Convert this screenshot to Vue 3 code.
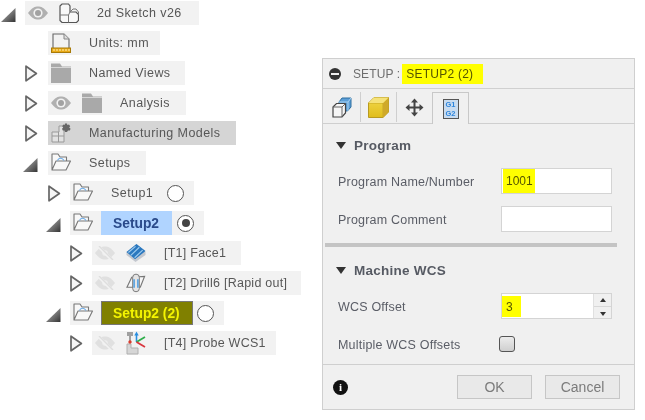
<script setup>
const rows = [
  { lvl: 0, tog: 'open', eye: 'on', icon: 'body', text: '2d Sketch v26', w: 174 },
  { lvl: 1, tog: '', icon: 'units', text: 'Units: mm', w: 112 },
  { lvl: 1, tog: 'closed', icon: 'folder', text: 'Named Views', w: 137 },
  { lvl: 1, tog: 'closed', eye: 'on', icon: 'folder', text: 'Analysis', w: 138 },
  { lvl: 1, tog: 'closed', icon: 'models', text: 'Manufacturing Models', w: 188, dark: true },
  { lvl: 1, tog: 'open', icon: 'setup', text: 'Setups', w: 98 },
  { lvl: 2, tog: 'closed', icon: 'setup', text: 'Setup1', w: 124, radio: 'off' },
  { lvl: 2, tog: 'open', icon: 'setup', text: 'Setup2', w: 134, radio: 'on', mark: 'blue' },
  { lvl: 3, tog: 'closed', eye: 'off', icon: 'face', text: '[T1] Face1', w: 149 },
  { lvl: 3, tog: 'closed', eye: 'off', icon: 'drill', text: '[T2] Drill6 [Rapid out]', w: 209 },
  { lvl: 2, tog: 'open', icon: 'setup', text: 'Setup2 (2)', w: 154, radio: 'off', mark: 'olive' },
  { lvl: 3, tog: 'closed', eye: 'off', icon: 'probe', text: '[T4] Probe WCS1', w: 184, tall: true },
]
</script>

<template>
  <div class="screen">
    <svg class="defs" width="0" height="0" aria-hidden="true">
      <defs>
        <linearGradient id="tri" x1="0" y1="0" x2="1" y2="1">
          <stop offset="0" stop-color="#c4c4c4" /><stop offset="1" stop-color="#333" />
        </linearGradient>
        <linearGradient id="gold" x1="0" y1="0" x2="0" y2="1">
          <stop offset="0" stop-color="#f2d84a" /><stop offset="1" stop-color="#e0bd1c" />
        </linearGradient>
        <symbol id="eye-on" viewBox="0 0 20 14">
          <path d="M0 7C4 1.5 7 0.5 10 0.5S16 1.5 20 7C16 12.5 13 13.5 10 13.5S4 12.5 0 7Z" fill="#b0b0b0" />
          <circle cx="10" cy="7" r="4.6" fill="#f2f2f2" /><circle cx="10" cy="7" r="3" fill="#a2a2a2" />
        </symbol>
        <symbol id="eye-off" viewBox="0 0 20 14">
          <path d="M0 7C4 1.5 7 0.5 10 0.5S16 1.5 20 7C16 12.5 13 13.5 10 13.5S4 12.5 0 7Z" fill="#e0e0e0" />
          <circle cx="10" cy="7" r="2.8" fill="#eeeeee" />
          <path d="M3 0L17 14" stroke="#f2f2f2" stroke-width="3" /><path d="M4 0L18 14" stroke="#dedede" stroke-width="1.4" />
        </symbol>
        <symbol id="body" viewBox="0 0 20 20">
          <path d="M1 3L3 1H9.5L11 3V9H17L19.5 11.5V17.5L17.5 19.5H3L1 17.5Z" fill="#f8f8f8" stroke="#555" stroke-width="1.2" />
          <path d="M11 9L14 6H17L19.5 9V11.5M1 12H9.5V19.5M9.5 12L11 9" fill="none" stroke="#777" stroke-width="1" />
        </symbol>
        <symbol id="units" viewBox="0 0 20 20">
          <path d="M2 15V1H13L18 6V15" fill="#f2f2f2" stroke="#666" stroke-width="1.1" />
          <path d="M13 1V6H18" fill="#ddd" stroke="#888" />
          <rect x="0.5" y="15" width="19" height="4.5" fill="#e8a916" stroke="#a87a08" />
          <path d="M3 16V18M6 16V18M9 16V18M12 16V18M15 16V18M18 16V18" stroke="#fff0b8" />
        </symbol>
        <symbol id="folder" viewBox="0 0 20 20">
          <path d="M0 4.5V0.5H9L11 3.5H20V20H0Z" fill="#a9a9a9" /><path d="M0 4.5H20" stroke="#d6d6d6" />
        </symbol>
        <symbol id="models" viewBox="0 0 20 20">
          <path d="M1 9H8V3H13V19H1ZM1 13H13M7.5 9V19" fill="#e2e2e2" stroke="#999" stroke-width="1" />
          <path d="M14 0.5L16 .5L16.4 2L18 1.6L19.2 3.2L18.2 4.6L19.6 5.8L18.8 7.6L17 7.4L16 9H14L13.6 7.4L11.8 7.6L11 5.8L12.2 4.6L11.2 3.2L12.4 1.6L13.6 2Z" fill="#666" />
        </symbol>
        <symbol id="setup" viewBox="0 0 20 20">
          <path d="M1 17V1H7L9 4H15.5V8M1 17L5 8H19.5L15 17Z" fill="#f8f8f8" stroke="#777" stroke-width="1.1" stroke-linejoin="round" />
          <path d="M6.5 7.5C7.5 4.5 11.5 4.5 13 7.5" fill="none" stroke="#6aaae8" stroke-width="1.1" />
        </symbol>
        <symbol id="face" viewBox="0 0 21 20">
          <path d="M0.5 9L11 0.5L20.5 9V12L10 19.5L0.5 12Z" fill="#c4c8cf" />
          <path d="M0.5 9L11 0.5L20.5 8L9.5 16.5Z" fill="#2b78bf" />
          <path d="M5 12.5L14 4M9 15L17.5 7M2.5 9.5L10 3" stroke="#9dcbee" stroke-width="1.2" />
        </symbol>
        <symbol id="drill" viewBox="0 0 21 20">
          <path d="M1 14.5L6 4L19.5 3L15 14.5Z" fill="#f6f6f6" stroke="#777" stroke-width="1.2" />
          <rect x="7" y="0.7" width="7" height="18.5" rx="3.5" fill="#e4e4e4" stroke="#777" />
          <path d="M8.5 6V15M12.5 6V15" stroke="#2f8fe0" stroke-width="1.3" />
        </symbol>
        <symbol id="probe" viewBox="0 0 20 24">
          <path d="M1 1H7V5H5V10H3V5H1Z" fill="#a0a0a0" />
          <path d="M1 13H5V17H12V23H1Z" fill="#d6d6d6" stroke="#b0b0b0" />
          <circle cx="4" cy="11" r="1.7" fill="#d93a2b" />
          <path d="M10.5 11V3" stroke="#2a8fe0" stroke-width="1.6" /><path d="M8.3 4.5L10.5 .5L12.7 4.5Z" fill="#2a8fe0" />
          <path d="M10.5 11L19 6" stroke="#2fae4b" stroke-width="1.8" />
          <path d="M10.5 11L19 16" stroke="#d9363e" stroke-width="1.8" />
        </symbol>
      </defs>
    </svg>

    <section class="tree">
      <div v-for="r in rows" :key="r.text" class="row" :class="'lvl' + r.lvl">
        <span class="tog">
          <svg v-if="r.tog === 'open'" class="tri" width="15" height="14" viewBox="0 0 15 14"><path d="M0 14L14.5 0V14Z" fill="url(#tri)" /></svg>
          <svg v-else-if="r.tog === 'closed'" width="13" height="17" viewBox="0 0 13 17"><path d="M1 1.2L11.4 8.5L1 15.8Z" fill="#f6f6f6" stroke="#666" stroke-width="1.7" stroke-linejoin="round" /></svg>
        </span>
        <div class="pill" :class="{ dark: r.dark }" :style="{ width: r.w + 'px' }">
          <svg v-if="r.eye" class="eye" viewBox="0 0 20 14"><use :href="'#eye-' + r.eye" /></svg>
          <svg class="ic" :class="{ tall: r.tall }" :viewBox="r.tall ? '0 0 20 24' : '0 0 20 20'"><use :href="'#' + r.icon" /></svg>
          <span v-if="r.mark" class="mark" :class="r.mark">{{ r.text }}</span>
          <span v-else class="label">{{ r.text }}</span>
          <span v-if="r.radio" class="radio" :class="r.radio"></span>
        </div>
      </div>
    </section>

    <section class="panel">
      <header class="title">
        <span class="minus"></span>
        <span class="t1">SETUP :</span>
        <span class="t2">SETUP2 (2)</span>
      </header>
      <nav class="tabs">
        <span class="tab sep">
          <svg width="20" height="21" viewBox="0 0 20 21">
            <path d="M7 5L10 1H19V10L15.5 14H7Z" fill="#5c9fd8" stroke="#2e6f9f" />
            <path d="M7 5H16V14M16 5L19 1" fill="none" stroke="#a9d2f0" />
            <path d="M1 10L4.5 6.5H13.5V16L10 20H1Z" fill="#f6f6f6" stroke="#444" stroke-width="1.2" />
            <path d="M1 10H10V20M10 10L13.5 6.5" fill="none" stroke="#666" />
          </svg>
        </span>
        <span class="tab sep">
          <svg width="21" height="21" viewBox="0 0 21 21">
            <path d="M0.5 6L6 0.5H20.5V15L15 20.5H0.5Z" fill="url(#gold)" stroke="#b89a20" />
            <path d="M0.5 6H15V20.5" fill="none" stroke="#c8a824" />
            <path d="M15 6L20.5 .5V15L15 20.5Z" fill="#cfa92a" />
            <path d="M.5 6L6 .5H20.5L15 6Z" fill="#f5e27a" />
          </svg>
        </span>
        <span class="tab">
          <svg width="19" height="19" viewBox="0 0 19 19">
            <path d="M9.5 0.5L13 4.5H10.5V8.5H14.5V6L18.5 9.5L14.5 13V10.5H10.5V14.5H13L9.5 18.5L6 14.5H8.5V10.5H4.5V13L0.5 9.5L4.5 6V8.5H8.5V4.5H6Z" fill="#444" />
          </svg>
        </span>
        <span class="tab active">
          <span class="gcode">G1<br />G2</span>
        </span>
      </nav>

      <div class="sect first">
        <h3><i class="caret"></i>Program</h3>
        <div class="field">
          <label>Program Name/Number</label>
          <div class="input"><span class="hl hl-a">1001</span></div>
        </div>
        <div class="field">
          <label>Program Comment</label>
          <div class="input"></div>
        </div>
      </div>
      <div class="rule"></div>
      <div class="sect">
        <h3><i class="caret"></i>Machine WCS</h3>
        <div class="field tight">
          <label>WCS Offset</label>
          <div class="input">
            <span class="hl hl-b">3</span>
            <span class="spin"><b class="up"></b><b class="down"></b></span>
          </div>
        </div>
        <div class="field check">
          <label>Multiple WCS Offsets</label>
          <span class="box"></span>
        </div>
      </div>
      <footer class="foot">
        <span class="info">i</span>
        <button class="btn">OK</button>
        <button class="btn">Cancel</button>
      </footer>
    </section>
  </div>
</template>

<style>
html, body { margin: 0; background: #fff; }
</style>

<style scoped>
.screen {
  width: 645px;
  height: 420px;
  display: flex;
  overflow: hidden;
  background: #fff;
  font-family: "Liberation Sans", Arial, sans-serif;
  color: #555;
  filter: blur(0.45px);
}
.defs { position: absolute; }

/* tree */
.tree { width: 322px; flex: none; padding-top: 1px; box-sizing: border-box; }
.row { display: flex; align-items: center; height: 24px; margin-bottom: 6px; }
.lvl0 { padding-left: 1px; }
.lvl1 { padding-left: 25px; }
.lvl2 { padding-left: 48px; }
.lvl3 { padding-left: 70px; }
.tog { width: 24px; flex: none; display: flex; align-items: center; margin-top: 1px; }
.lvl1 .tog { width: 23px; }
.lvl2 .tog, .lvl3 .tog { width: 22px; }
.lvl0 .tog { margin-top: 3px; }
.lvl1 .tri, .lvl2 .tri { margin-left: -2px; margin-top: 2px; }
.pill {
  display: flex;
  align-items: center;
  height: 100%;
  flex: none;
  padding-left: 3px;
  background: #f2f2f2;
  box-sizing: border-box;
}
.pill.dark { background: #d5d5d5; }
.eye { width: 20px; height: 14px; margin-right: 11px; flex: none; }
.ic { width: 20px; height: 20px; flex: none; }
.ic.tall { height: 24px; }
.label {
  margin-left: 18px;
  font-size: 12.5px;
  letter-spacing: 0.42px;
  white-space: nowrap;
  color: #575757;
}
.lvl3 .label { letter-spacing: 0.25px; }
.mark {
  margin-left: 8px;
  height: 100%;
  display: flex;
  align-items: center;
  box-sizing: border-box;
  font-size: 13.8px;
  font-weight: 700;
  white-space: nowrap;
}
.mark.blue { width: 71px; padding-left: 12px; background: #b0d4ff; color: #2a4a8a; }
.mark.olive { width: 92px; padding-left: 11px; background: #808000; color: #f4f400; border: 1px solid #777; }
.radio {
  width: 17px;
  height: 17px;
  box-sizing: border-box;
  border: 1.5px solid #555;
  border-radius: 50%;
  background: #fff;
  margin-left: 14px;
  flex: none;
  position: relative;
}
.mark + .radio { margin-left: 5px; }
.mark.olive + .radio { margin-left: 4px; }
.radio.on::after {
  content: "";
  position: absolute;
  inset: 3.5px;
  background: #444;
  border-radius: 50%;
}

/* panel */
.panel {
  width: 313px;
  height: 352px;
  margin-top: 58px;
  box-sizing: border-box;
  border: 1px solid #cfcfcf;
  background: #f0f0f0;
  flex: none;
  display: flex;
  flex-direction: column;
  font-size: 12px;
}
.title {
  height: 30px;
  flex: none;
  display: flex;
  align-items: center;
  padding-left: 6px;
  border-bottom: 1px solid #d0d0d0;
  box-sizing: border-box;
}
.minus {
  width: 12px;
  height: 12px;
  border-radius: 50%;
  background: #333;
  position: relative;
  margin-right: 12px;
}
.minus::after {
  content: "";
  position: absolute;
  left: 2px;
  right: 2px;
  top: 5px;
  height: 2px;
  background: #eee;
}
.t1 { color: #6d6d6d; margin-right: 2px; letter-spacing: 0.1px; }
.t2 {
  background: #ffff00;
  color: #555500;
  height: 20px;
  width: 81px;
  padding-left: 4px;
  box-sizing: border-box;
  display: flex;
  align-items: center;
  white-space: nowrap;
  letter-spacing: 0.25px;
}
.tabs {
  height: 35px;
  flex: none;
  display: flex;
  align-items: flex-end;
  border-bottom: 1px solid #cfcfcf;
  box-sizing: border-box;
  padding-left: 2px;
  position: relative;
}
.tab {
  height: 31px;
  width: 36px;
  display: flex;
  align-items: center;
  justify-content: center;
  flex: none;
  box-sizing: border-box;
}
.tab.sep { height: 30px; border-right: 1px solid #cfcfcf; margin-bottom: 1px; }
.tab.sep:first-child svg { margin-left: -2px; }
.tab:nth-child(3) svg { margin-left: -2px; }
.tab.active {
  width: 37px;
  height: 32px;
  margin-left: -1px;
  margin-bottom: -1px;
  background: #f0f0f0;
  border: 1px solid #c8c8c8;
  border-bottom: 0;
}
.gcode {
  width: 16px;
  height: 20px;
  border: 1px solid #555;
  background: #c9dcf0;
  color: #2e86dd;
  font-size: 7.5px;
  font-weight: 700;
  line-height: 9px;
  text-align: center;
  box-sizing: border-box;
}

.sect h3 {
  margin: 0;
  display: flex;
  align-items: center;
  font-size: 13.5px;
  font-weight: 700;
  color: #565a63;
  height: 16px;
  letter-spacing: 0.25px;
}
.caret {
  width: 0;
  height: 0;
  border: 5px solid transparent;
  border-top: 7px solid #333;
  border-bottom: 0;
  margin: 0 8px 0 13px;
}
.sect.first { padding-top: 13px; }
.field {
  display: flex;
  align-items: center;
  height: 26px;
  margin-top: 12px;
  padding-left: 15px;
  color: #5a5d66;
  font-size: 12.5px;
  letter-spacing: 0.2px;
}
.sect.first .field:first-of-type { margin-top: 15px; }
.field label { width: 163px; flex: none; white-space: nowrap; padding-top: 2px; }
.input {
  width: 111px;
  height: 26px;
  box-sizing: border-box;
  border: 1px solid #d4d4d4;
  background: #fff;
  display: flex;
  align-items: stretch;
  position: relative;
  font-size: 12px;
  letter-spacing: 0;
}
.hl {
  background: #ffff00;
  color: #555500;
  display: flex;
  align-items: center;
  box-sizing: border-box;
}
.hl-a { margin-left: 1px; width: 32px; padding-left: 3px; }
.hl-b { margin-top: 2px; margin-bottom: 1px; width: 19px; padding-left: 4px; }
.spin {
  margin-left: auto;
  width: 17px;
  background: #f0f0f0;
  display: flex;
  flex-direction: column;
  border-left: 1px solid #e0e0e0;
}
.spin b { flex: 1; position: relative; display: block; }
.spin .up { border-bottom: 1px solid #d8d8d8; }
.spin b::after {
  content: "";
  position: absolute;
  left: 6px;
  top: 4px;
  border: 3px solid transparent;
}
.spin .up::after { border-bottom: 4px solid #333; border-top: 0; }
.spin .down::after { border-top: 4px solid #333; border-bottom: 0; top: 5px; }
.rule {
  height: 4px;
  width: 292px;
  margin: 11px 0 0 2px;
  background: #c4c4c4;
  flex: none;
}
.sect:not(.first) { padding-top: 15px; }
.field.tight { margin-top: 15px; }
.field.check { height: 16px; margin-top: 17px; }
.field.check label { width: 161px; }
.box {
  width: 16px;
  height: 16px;
  box-sizing: border-box;
  border: 1.5px solid #555;
  border-radius: 3px;
  background: linear-gradient(#ececec, #cfcfcf);
}
.foot {
  margin-top: auto;
  height: 45px;
  flex: none;
  border-top: 1px solid #cfcfcf;
  box-sizing: border-box;
  display: flex;
  align-items: center;
  padding-left: 10px;
}
.info {
  width: 15px;
  height: 15px;
  border-radius: 50%;
  background: #111;
  color: #fff;
  font: 700 11px/15px "Liberation Serif", serif;
  text-align: center;
  margin-right: 109px;
  flex: none;
}
.btn {
  width: 75px;
  height: 24px;
  margin: 0 13px 0 0;
  padding: 0;
  border: 1px solid #c6c6c6;
  background: #e9e9e9;
  color: #7b7b7b;
  font: 14px "Liberation Sans", Arial, sans-serif;
}
</style>
